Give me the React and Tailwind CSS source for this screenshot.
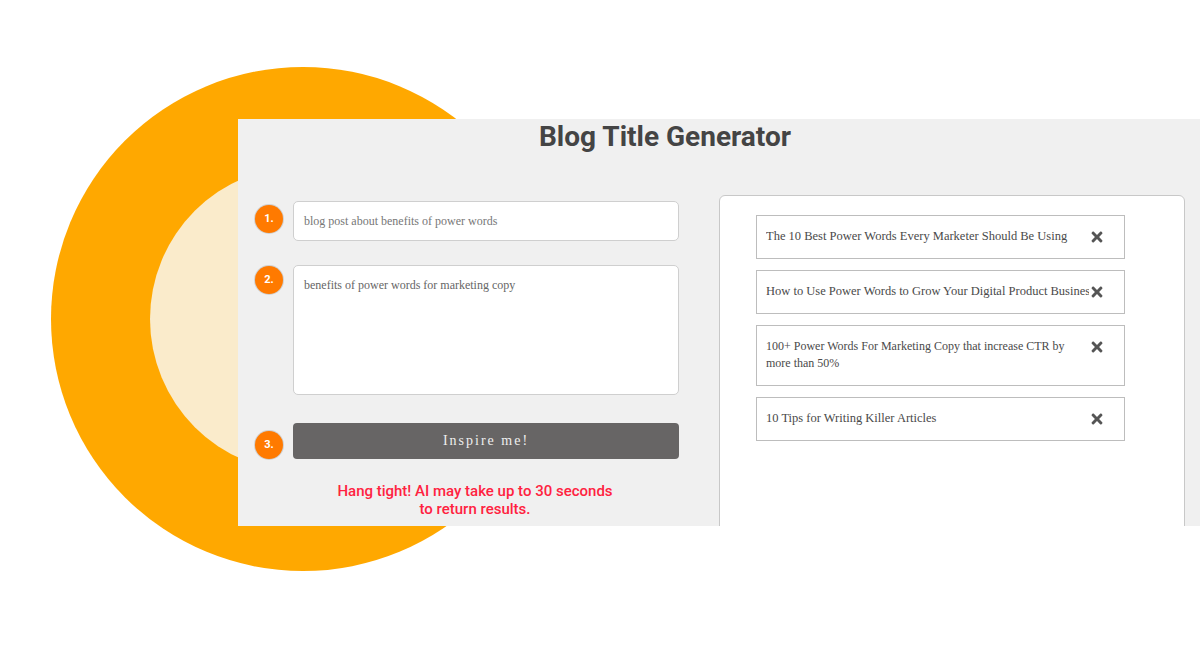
import { FaTimes } from "react-icons/fa";

const titles = [
  "The 10 Best Power Words Every Marketer Should Be Using",
  "How to Use Power Words to Grow Your Digital Product Business",
  "100+ Power Words For Marketing Copy that increase CTR by more than 50%",
  "10 Tips for Writing Killer Articles",
];

function Step({ n }) {
  return (
    <div className="w-[28px] h-[28px] shrink-0 rounded-full bg-[#ff7a00] shadow-[0_0_0_1px_rgba(150,150,150,0.35)] flex items-center justify-center text-white text-[11px] font-bold font-['Roboto',sans-serif]">
      {n}.
    </div>
  );
}

function TitleCard({ text, wrap }) {
  return (
    <div className="relative border border-[#bdbdbd] bg-white pl-[9px] pr-[36px] pt-[12px] pb-[13px] font-['Liberation_Serif',serif] text-[12.5px] leading-[17px] text-[#4a4a4a]">
      <p className={wrap ? "pr-[6px] text-[12px]" : "whitespace-nowrap overflow-hidden -mr-[8px]"}>{text}</p>
      {/* remove icon */}
      <FaTimes className="absolute right-[19px] top-[13px] w-[16px] h-[16px] text-[#555] bg-white" />
    </div>
  );
}

export default function App() {
  return (
    <div className="relative w-[1200px] h-[646px] bg-white overflow-hidden">
      {/* decorative rings */}
      <div className="absolute left-[51px] top-[67px] w-[504px] h-[504px] rounded-full bg-[#ffa800]" />
      <div className="absolute left-[150px] top-[166px] w-[306px] h-[306px] rounded-full bg-[#faebcb]" />

      {/* app screenshot */}
      <div className="relative ml-[238px] mt-[119px] w-[962px] h-[407px] bg-[#f0f0f0] overflow-hidden">
        <h1 className="text-center pr-[108px] font-['Roboto',sans-serif] font-bold text-[28px] leading-[36px] text-[#444]">
          Blog Title Generator
        </h1>

        <div className="flex mt-[40px]">
          {/* form column */}
          <div className="w-[480px] pl-[17px] flex flex-col">
            <div className="flex items-center gap-[10px] h-[40px] mt-[6px]">
              <div className="pb-[4px]">
                <Step n={1} />
              </div>
              <div className="w-[386px] h-[40px] bg-white border border-[#cfcfcf] rounded-[5px] px-[10px] flex items-center font-['Liberation_Serif',serif] text-[12px] text-[#777]">
                blog post about benefits of power words
              </div>
            </div>

            <div className="flex items-start gap-[10px] mt-[24px]">
              <div className="pt-[1px]">
                <Step n={2} />
              </div>
              <div className="w-[386px] h-[130px] bg-white border border-[#cfcfcf] rounded-[5px] px-[10px] pt-[10px] font-['Liberation_Serif',serif] text-[12px] text-[#666]">
                benefits of power words for marketing copy
              </div>
            </div>

            <div className="flex items-center gap-[10px] mt-[27px]">
              <div className="pt-[9px]">
                <Step n={3} />
              </div>
              <button className="w-[386px] h-[36px] bg-[#676565] rounded-[4px] text-[#eee] font-['Liberation_Serif',serif] text-[14px] tracking-[2px]">
                Inspire me!
              </button>
            </div>

            <p className="mt-[23px] ml-[37px] w-[366px] text-center font-['Roboto',sans-serif] font-medium text-[15px] leading-[18px] text-[#ff2240]">
              Hang tight! AI may take up to 30 seconds
              <br />
              to return results.
            </p>
          </div>

          {/* results column */}
          <div className="ml-[1px] w-[466px] h-[400px] bg-white border border-[#c8c8c8] rounded-t-[6px] pt-[19px] pl-[36px]">
            <div className="w-[369px] flex flex-col gap-[11px]">
              {titles.map((t, i) => (
                <TitleCard key={i} text={t} wrap={i === 2} />
              ))}
            </div>
          </div>
        </div>
      </div>
    </div>
  );
}
